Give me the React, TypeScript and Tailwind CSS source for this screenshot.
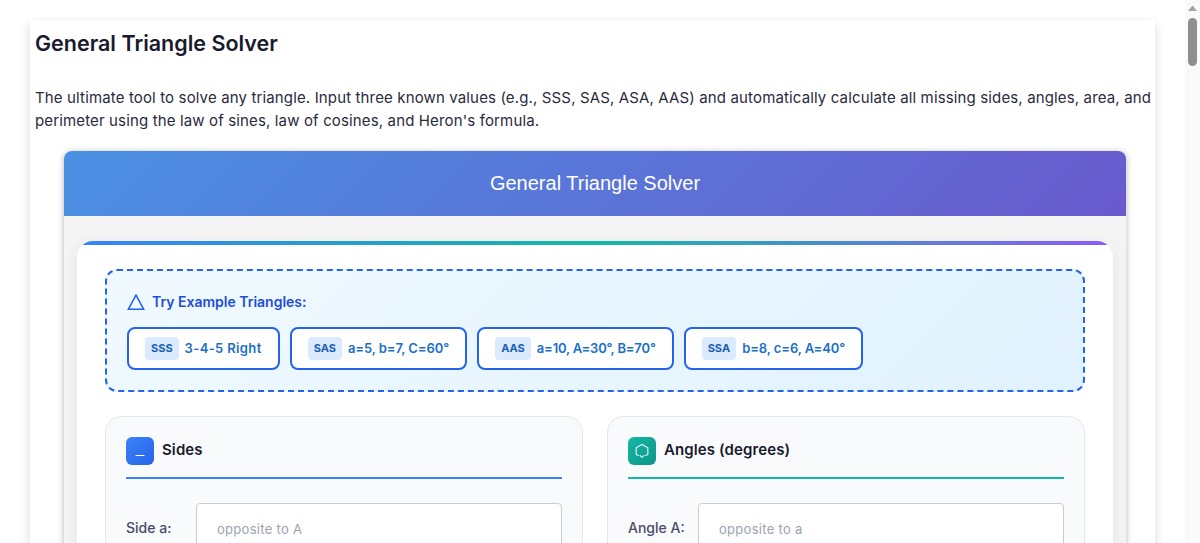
import React from 'react';

const SANS = "font-['Inter','Noto_Sans',sans-serif]";

const examples = [
  { tag: 'SSS', label: '3-4-5 Right', track: 'tracking-[0.36px]' },
  { tag: 'SAS', label: 'a=5, b=7, C=60°', track: 'tracking-[-0.07px]' },
  { tag: 'AAS', label: 'a=10, A=30°, B=70°', track: 'tracking-[-0.17px]' },
  { tag: 'SSA', label: 'b=8, c=6, A=40°', track: 'tracking-[-0.07px]' },
];

const Scrollbar = () => (
  <div className="w-[15px] shrink-0 bg-[#fafafa] flex flex-col items-center">
    <svg width="15" height="15" viewBox="0 0 15 15" className="shrink-0">
      <path d="M7.5 5.5 L12 11 L3 11 Z" fill="#a3a3a3" />
    </svg>
    <div className="w-[9px] h-[48px] mt-[3px] rounded-full bg-[#8f8f8f]" />
  </div>
);

const Row = ({ label, hint }: { label: string; hint: string }) => (
  <div className="flex items-center gap-[13px] mb-4">
    <label className="w-[57px] shrink-0 pb-[4px] text-[14px] font-medium text-[#4a4a68] whitespace-nowrap">{label}</label>
    <input
      placeholder={hint}
      className="flex-1 min-w-0 h-[52px] rounded-[4px] border border-[#cccccc] bg-white px-5 text-[13px] tracking-[0.3px] outline-none placeholder:text-[#9ca3af]"
    />
  </div>
);

const Panel = ({
  title,
  icon,
  underline,
  label,
  hint,
}: {
  title: string;
  icon: React.ReactNode;
  underline: string;
  label: string;
  hint: string;
}) => (
  <div className="flex-1 min-w-0 rounded-[16px] border border-[#e5e7eb] bg-[#f9fafc] px-5 pt-5 pb-5">
    <div className={`flex items-center gap-2 pb-[12px] border-b-2 mb-6 ${underline}`}>
      {icon}
      <h3 className="pb-px text-[15px] font-semibold tracking-[0.1px] text-[#1a1a2e]">{title}</h3>
    </div>
    <Row label={label} hint={hint} />
  </div>
);

export default function App() {
  return (
    <div className={`flex h-[543px] overflow-hidden bg-white ${SANS}`}>
      <main className="flex-1 min-w-0 overflow-hidden pl-[30px] pr-[30px] pt-5">
        <article className="bg-white pl-[5px] pr-[2px] shadow-[0_4px_10px_rgba(0,0,0,0.15)]">
          <h1 className="text-[21.5px] leading-[30px] pt-[8px] font-semibold text-[#1a1a2e]">General Triangle Solver</h1>
          <p className="mt-[28px] text-[15px] leading-[23px] tracking-[0.14px] text-[#2a2a3e]">
            The ultimate tool to solve any triangle. Input three known values (e.g., SSS, SAS, ASA, AAS) and automatically calculate all missing sides, angles, area, and perimeter using the law of sines, law of cosines, and Heron's formula.
          </p>

          <section className="ml-[29px] mr-[27px] mt-[19px] rounded-t-[8px] bg-[#f5f5f5] shadow-[0_1px_6px_rgba(0,0,0,0.3)]">
            <header className="h-[65px] pb-[2px] rounded-t-[8px] bg-[linear-gradient(135deg,#4a90e2,#6a5acd)] flex items-center justify-center">
              <h2 className="font-['Liberation_Sans',sans-serif] text-[20px] text-white">General Triangle Solver</h2>
            </header>

            <div className="px-[13px] pt-[25px]">
              <div className="rounded-t-[16px] bg-white overflow-hidden shadow-[0_4px_20px_rgba(0,0,0,0.08)]">
                <div className="h-1 bg-[linear-gradient(90deg,#3b82f6,#14b8a6,#8b5cf6)]" />
                <div className="px-7 pt-6">
                  <div className="rounded-[12px] border-2 border-dashed border-[#2563eb] bg-[linear-gradient(135deg,#f0f9ff,#e0f2fe)] px-5 pt-[20px] pb-5">
                    <div className="flex items-center gap-[7px] text-[14px] font-semibold text-[#1d4ed8] mb-[15px]">
                      <svg width="18" height="18" viewBox="0 0 18 18" fill="none" stroke="#2563eb" strokeWidth="1.6">
                        <path d="M9 2.2 L16.6 16.2 L1.4 16.2 Z" />
                      </svg>
                      Try Example Triangles:
                    </div>
                    <div className="flex gap-[10px]">
                      {examples.map((e) => (
                        <button
                          key={e.tag}
                          className="h-[43px] flex items-center gap-[6px] rounded-[8px] border-2 border-[#2563eb] bg-white pl-4 pr-4 text-[13px] font-semibold text-[#1a6fc9] whitespace-nowrap"
                        >
                          <span className="rounded-[4px] bg-[#dbeafe] px-[6px] py-[3px] text-[11px] leading-[17px] font-bold text-[#1a5fb4]">{e.tag}</span>
                          <span className={e.track}>{e.label}</span>
                        </button>
                      ))}
                    </div>
                  </div>

                  <div className="flex gap-6 mt-6">
                    <Panel
                      title="Sides"
                      underline="border-[#3b82f6]"
                      label="Side a:"
                      hint="opposite to A"
                      icon={
                        <div className="w-7 h-7 shrink-0 rounded-[6px] bg-[linear-gradient(135deg,#3b82f6,#2563eb)] flex items-center justify-center">
                          <svg width="12" height="12" viewBox="0 0 12 12"><path d="M1.5 10.5 H10.5" stroke="#fff" strokeWidth="1.2" /></svg>
                        </div>
                      }
                    />
                    <Panel
                      title="Angles (degrees)"
                      underline="border-[#14b8a6]"
                      label="Angle A:"
                      hint="opposite to a"
                      icon={
                        <div className="w-7 h-7 shrink-0 rounded-[6px] bg-[linear-gradient(135deg,#14b8a6,#0d9488)] flex items-center justify-center">
                          <svg width="18" height="18" viewBox="0 0 16 16" fill="none" stroke="#fff" strokeWidth="1.05" opacity="0.85">
                            <path d="M5 12.2 L2.8 11 V5.2 L8 2.2 L13.2 5.2 V11 L11 12.2" />
                            <path d="M6 11.6 L8 13.6 L10 11.6" />
                          </svg>
                        </div>
                      }
                    />
                  </div>
                </div>
              </div>
            </div>
          </section>
        </article>
      </main>
      <Scrollbar />
    </div>
  );
}
